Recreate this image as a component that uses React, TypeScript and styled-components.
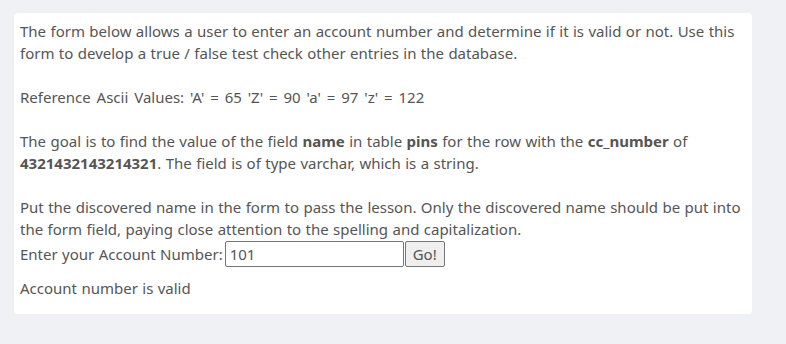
import React, { useState } from "react";
import styled, { createGlobalStyle } from "styled-components";

const GlobalStyle = createGlobalStyle`
  html, body {
    margin: 0;
    padding: 0;
    background: #f0f1f5;
  }
  body {
    font-family: "Noto Sans", "Open Sans", sans-serif;
  }
`;

const Page = styled.div`
  padding: 13px 34px 28px 14px;
  min-height: 344px;
  box-sizing: border-box;
`;

const Panel = styled.div`
  background: #fff;
  border-radius: 4px;
  padding: 7px 6px 15px 6px;
  color: #555;
  font-size: 15px;
  line-height: 22px;
  word-spacing: 0.5px;
`;

const Para = styled.p<{ $gap?: number }>`
  margin: 0 0 ${(p) => (p.$gap ?? 22)}px 0;
`;

const Ascii = styled(Para)`
  word-spacing: 2px;
`;

const Form = styled.form`
  display: flex;
  align-items: center;
  height: 27px;
`;

const Label = styled.span`
  margin-right: 2px;
`;

const Input = styled.input`
  width: 179px;
  height: 26px;
  box-sizing: border-box;
  border: 1px solid #767676;
  border-radius: 2px;
  padding: 0 4px;
  font-family: inherit;
  font-size: 15px;
  color: #555;
  outline: none;
`;

const Button = styled.button`
  height: 26px;
  box-sizing: border-box;
  padding: 0 7px;
  margin-left: 1px;
  border: 1px solid #767676;
  border-radius: 2px;
  background: #efefef;
  font-family: inherit;
  font-size: 15px;
  color: #555;
  cursor: pointer;
`;

const Result = styled.div`
  margin-top: 10px;
`;

export default function App() {
  const [account, setAccount] = useState("101");

  return (
    <>
      <GlobalStyle />
      <Page>
        <Panel>
          <Para>
            The form below allows a user to enter an account number and determine if it is valid or not. Use this
            form to develop a true / false test check other entries in the database.
          </Para>
          <Ascii>Reference Ascii Values: 'A' = 65 'Z' = 90 'a' = 97 'z' = 122</Ascii>
          <Para>
            The goal is to find the value of the field <b>name</b> in table <b>pins</b> for the row with the{" "}
            <b>cc_number</b> of <b>4321432143214321</b>. The field is of type varchar, which is a string.
          </Para>
          <Para $gap={0}>
            Put the discovered name in the form to pass the lesson. Only the discovered name should be put into
            the form field, paying close attention to the spelling and capitalization.
          </Para>
          <Form onSubmit={(e) => e.preventDefault()}>
            <Label>Enter your Account Number:</Label>
            <Input value={account} onChange={(e) => setAccount(e.target.value)} />
            <Button type="submit">Go!</Button>
          </Form>
          <Result>Account number is valid</Result>
        </Panel>
      </Page>
    </>
  );
}
